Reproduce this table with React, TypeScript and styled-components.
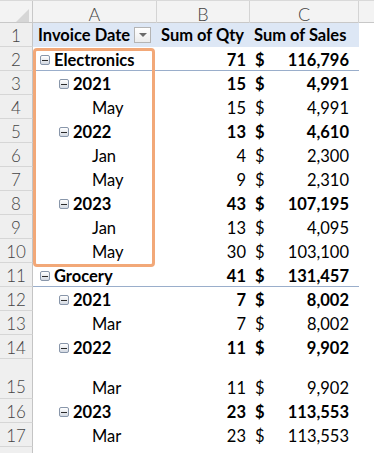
import styled, { createGlobalStyle } from 'styled-components';

const GlobalStyle = createGlobalStyle`
    html, body {
        margin: 0;
        padding: 0;
        background: #ffffff;
        overflow: hidden;
    }
    body {
        font-family: 'Lato', 'Liberation Sans', sans-serif;
        color: #000000;
    }
`;

const COLS = '33px 124px 93px 109px 1fr';

const Sheet = styled.div`
    width: 374px;
    height: 453px;
    display: flex;
    flex-direction: column;
    background: #ffffff;
`;

const TopStrip = styled.div`
    height: 4px;
    background: #f3f3f3;
    border-bottom: 1px solid #d9d9d9;
`;

const HeaderBand = styled.div`
    display: grid;
    grid-template-columns: ${COLS};
    height: 22px;
    background: #f3f3f3;
    border-bottom: 1px solid #c8c8c8;
    box-sizing: border-box;
`;

const Corner = styled.div`
    position: relative;
    border-right: 1px solid #c8c8c8;
    &::after {
        content: '';
        position: absolute;
        right: 3px;
        bottom: 3px;
        border-left: 13px solid transparent;
        border-bottom: 13px solid #d6d6d6;
    }
`;

const ColLetter = styled.div`
    display: flex;
    align-items: center;
    justify-content: center;
    padding-top: 2px;
    font-size: 18px;
    font-weight: 300;
    color: #444444;
    border-right: 1px solid #d4d4d4;
    &:last-child {
        border-right: none;
    }
`;

const Row = styled.div<{ $h?: number }>`
    display: grid;
    grid-template-columns: ${COLS};
    height: ${(p) => p.$h ?? 24}px;
    flex: none;
    box-sizing: border-box;
    font-size: 16.5px;
`;

const RowNum = styled.div<{ $tall?: boolean }>`
    display: flex;
    align-items: ${(p) => (p.$tall ? 'flex-end' : 'center')};
    justify-content: center;
    padding-top: ${(p) => (p.$tall ? 0 : 2)}px;
    padding-bottom: ${(p) => (p.$tall ? 1 : 0)}px;
    background: #efefef;
    color: #444444;
    font-size: 17px;
    font-weight: 300;
    border-right: 1px solid #c4c4c4;
    border-bottom: 1px solid #d6d6d6;
    box-sizing: border-box;
`;

const Cell = styled.div<{ $bold?: boolean; $line?: boolean; $head?: boolean }>`
    display: flex;
    align-items: flex-end;
    padding-bottom: 0;
    box-sizing: border-box;
    white-space: nowrap;
    font-weight: ${(p) => (p.$bold || p.$head ? 700 : 400)};
    background: ${(p) => (p.$head ? '#dde7f5' : '#ffffff')};
    border-bottom: 1px solid ${(p) => (p.$line ? '#9aaecb' : 'transparent')};
`;

const LabelCell = styled(Cell)<{ $level: number; $leaf?: boolean }>`
    padding-left: ${(p) => 7 + p.$level * 19 + (p.$leaf ? 14 : 0)}px;
    gap: 4px;
`;

const HeadLabel = styled(Cell)`
    padding-left: 5px;
    gap: 4px;
    align-items: center;
    padding-top: 1px;
`;

const QtyCell = styled(Cell)`
    justify-content: flex-end;
    padding-right: 4px;
`;

const SalesCell = styled(Cell)`
    justify-content: space-between;
    padding-left: 5px;
    padding-right: 10px;
`;

const HeadText = styled(Cell)`
    padding-left: 4px;
    align-items: center;
    padding-top: 1px;
`;

const Blank = styled.div``;

const Toggle = styled.span`
    width: 10px;
    height: 10px;
    margin-bottom: 5px;
    box-sizing: border-box;
    border: 1px solid #8896aa;
    border-radius: 2px;
    background: linear-gradient(#ffffff, #d3d9e2);
    display: flex;
    align-items: center;
    justify-content: center;
    flex: none;
    &::before {
        content: '';
        width: 6px;
        height: 1px;
        background: #2b2b2b;
    }
`;

const Dropdown = styled.span`
    width: 17px;
    height: 16px;
    margin-top: -1px;
    box-sizing: border-box;
    border: 1px solid #b4b4b4;
    background: linear-gradient(#ffffff, #ececec);
    display: flex;
    align-items: center;
    justify-content: center;
    flex: none;
    &::before {
        content: '';
        border-left: 4px solid transparent;
        border-right: 4px solid transparent;
        border-top: 4px solid #6a6a6a;
        margin-top: 1px;
    }
`;

const Group = styled.div`
    position: relative;
    display: flex;
    flex-direction: column;
`;

const Highlight = styled.div`
    position: absolute;
    left: 33px;
    top: 1px;
    width: 122px;
    height: 219px;
    box-sizing: border-box;
    border: 3px solid #f2a878;
    border-radius: 4px;
    pointer-events: none;
`;

type Item = {
    label: string;
    level: number;
    qty: number;
    sales: string;
    bold?: boolean;
    line?: boolean;
    h?: number;
};

const electronics: Item[] = [
    { label: 'Electronics', level: 0, qty: 71, sales: '116,796', bold: true, line: true },
    { label: '2021', level: 1, qty: 15, sales: '4,991', bold: true },
    { label: 'May', level: 2, qty: 15, sales: '4,991' },
    { label: '2022', level: 1, qty: 13, sales: '4,610', bold: true },
    { label: 'Jan', level: 2, qty: 4, sales: '2,300' },
    { label: 'May', level: 2, qty: 9, sales: '2,310' },
    { label: '2023', level: 1, qty: 43, sales: '107,195', bold: true },
    { label: 'Jan', level: 2, qty: 13, sales: '4,095' },
    { label: 'May', level: 2, qty: 30, sales: '103,100' },
];

const grocery: Item[] = [
    { label: 'Grocery', level: 0, qty: 41, sales: '131,457', bold: true, line: true },
    { label: '2021', level: 1, qty: 7, sales: '8,002', bold: true },
    { label: 'Mar', level: 2, qty: 7, sales: '8,002' },
    { label: '2022', level: 1, qty: 11, sales: '9,902', bold: true },
    { label: 'Mar', level: 2, qty: 11, sales: '9,902', h: 40 },
    { label: '2023', level: 1, qty: 23, sales: '113,553', bold: true },
    { label: 'Mar', level: 2, qty: 23, sales: '113,553' },
];

function DataRow({ item, num }: { item: Item; num: number }) {
    const leaf = item.level === 2;
    return (
        <Row $h={item.h}>
            <RowNum $tall={!!item.h}>{num}</RowNum>
            <LabelCell $level={item.level} $leaf={leaf} $bold={item.bold} $line={item.line}>
                {!leaf && <Toggle />}
                <span>{item.label}</span>
            </LabelCell>
            <QtyCell $bold={item.bold} $line={item.line}>
                {item.qty}
            </QtyCell>
            <SalesCell $bold={item.bold} $line={item.line}>
                <span>$</span>
                <span>{item.sales}</span>
            </SalesCell>
            <Blank />
        </Row>
    );
}

export default function App() {
    return (
        <>
            <GlobalStyle />
            <Sheet>
                <TopStrip />
                <HeaderBand>
                    <Corner />
                    <ColLetter>A</ColLetter>
                    <ColLetter>B</ColLetter>
                    <ColLetter>C</ColLetter>
                    <ColLetter />
                </HeaderBand>
                <Row>
                    <RowNum>1</RowNum>
                    <HeadLabel $head>
                        <span>Invoice Date</span>
                        <Dropdown />
                    </HeadLabel>
                    <HeadText $head>Sum of Qty</HeadText>
                    <HeadText $head>Sum of Sales</HeadText>
                    <Blank />
                </Row>
                <Group>
                    {electronics.map((item, i) => (
                        <DataRow key={i} item={item} num={i + 2} />
                    ))}
                    <Highlight />
                </Group>
                {grocery.map((item, i) => (
                    <DataRow key={i} item={item} num={i + 11} />
                ))}
                <Row>
                    <RowNum />
                </Row>
            </Sheet>
        </>
    );
}
